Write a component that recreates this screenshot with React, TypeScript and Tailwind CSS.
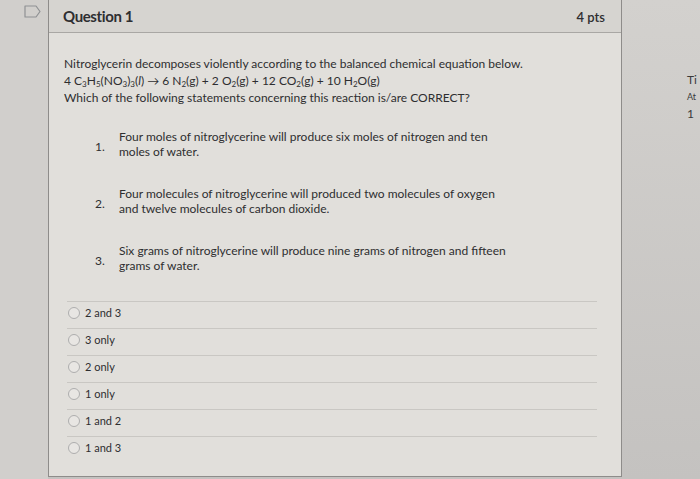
import React from 'react';

const statements = [
  'Four moles of nitroglycerine will produce six moles of nitrogen and ten moles of water.',
  'Four molecules of nitroglycerine will produced two molecules of oxygen and twelve molecules of carbon dioxide.',
  'Six grams of nitroglycerine will produce nine grams of nitrogen and fifteen grams of water.',
];

const answers = ['2 and 3', '3 only', '2 only', '1 only', '1 and 2', '1 and 3'];

function FlagIcon() {
  return (
    <svg width="17" height="13" viewBox="0 0 17 13" fill="none" aria-hidden>
      <path d="M1 1h11l4 5.5L12 12H1z" stroke="#8f9193" strokeWidth="1.2" strokeLinejoin="round" />
    </svg>
  );
}

export default function App() {
  return (
    <div
      className="flex h-[479px] w-[700px] overflow-hidden bg-gradient-to-b from-[#d3d1ce] to-[#c4c2c0] text-[#2e2e30]"
      style={{ fontFamily: 'Lato, "Open Sans", sans-serif' }}
    >
      <div className="flex w-[48px] shrink-0 justify-end bg-[#d1cfcc] pr-[7px] pt-[5px]">
        <FlagIcon />
      </div>

      <section className="flex h-[477px] w-[574px] shrink-0 flex-col border-x border-b border-[#8e8c8a] bg-[#e1dfdb]">
        <header className="flex h-[33px] shrink-0 items-center justify-between border-b border-[#a9a7a4] bg-[#d6d4d0] pl-[14px] pr-[16px]">
          <h2 className="text-[15px] font-bold tracking-tight">Question 1</h2>
          <span className="pt-[3px] text-[13px] font-semibold">4 pts</span>
        </header>

        <div className="flex flex-col pl-[15px] pt-[22px]">
          <div className="text-[12px] leading-[17px]">
            <p>Nitroglycerin decomposes violently according to the balanced chemical equation below.</p>
            <p>
              4 C<sub className="text-[8px]">3</sub>H<sub className="text-[8px]">5</sub>(NO
              <sub className="text-[8px]">3</sub>)<sub className="text-[8px]">3</sub>(<i>l</i>) → 6 N
              <sub className="text-[8px]">2</sub>(g) + 2 O<sub className="text-[8px]">2</sub>(g) + 12 CO
              <sub className="text-[8px]">2</sub>(g) + 10 H<sub className="text-[8px]">2</sub>O(g)
            </p>
            <p>Which of the following statements concerning this reaction is/are CORRECT?</p>
          </div>

          <ol className="mt-[23px] flex flex-col gap-[27px] pl-[31px] text-[12px] leading-[15px]">
            {statements.map((text, idx) => (
              <li key={idx} className="flex items-center">
                <span className="w-[24px] shrink-0 pt-[4px]">{idx + 1}.</span>
                <span className="w-[392px]">{text}</span>
              </li>
            ))}
          </ol>

          <ul className="ml-[3px] mr-[24px] mt-[28px] text-[11px]">
            {answers.map((label) => (
              <li
                key={label}
                className="flex h-[27px] items-center gap-[5px] border-t border-[#c9c7c3] pb-[4px] pl-[1px]"
              >
                <span className="size-[12px] rounded-full border border-[#aeaeae] bg-[#e8e6e3]" />
                <span>{label}</span>
              </li>
            ))}
          </ul>
        </div>
      </section>

      <aside className="flex flex-1 flex-col items-start pl-[65px] pt-[71px] text-[#3a3a3a]">
        <span className="text-[12px] leading-[17px]">Ti</span>
        <span className="text-[9px] leading-[17px]">At</span>
        <span className="text-[12px] leading-[17px]">1</span>
      </aside>
    </div>
  );
}
